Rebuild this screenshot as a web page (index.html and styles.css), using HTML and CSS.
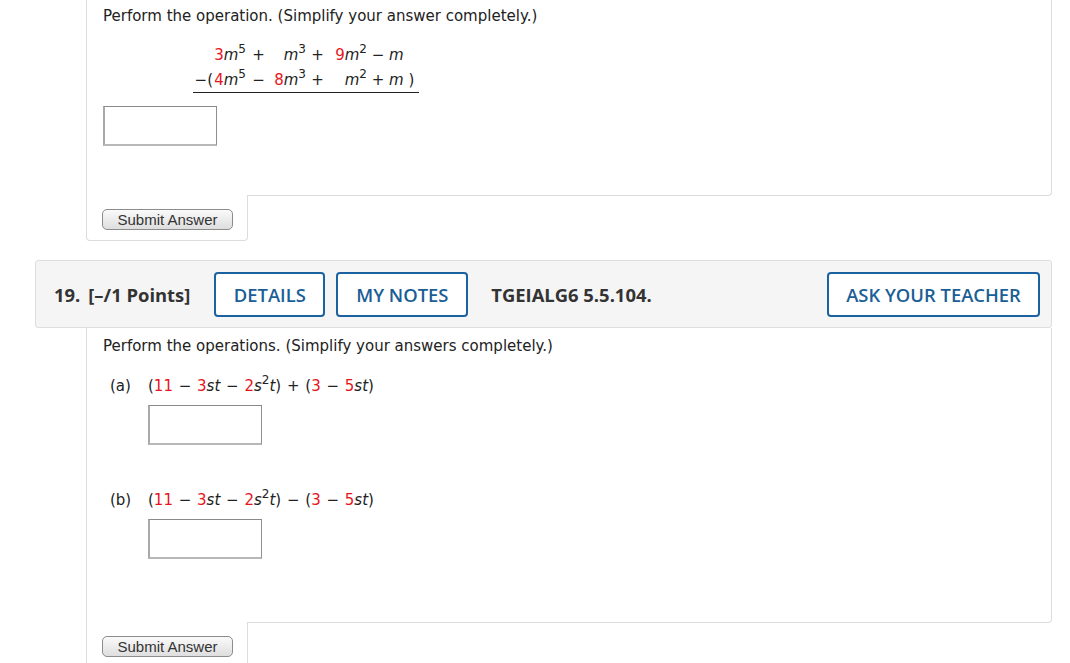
FILE: index.html
```html
<!DOCTYPE html>
<html>
<head>
<meta charset="utf-8">
<link rel="stylesheet" href="styles.css">
</head>
<body>
<div class="page">
  <div class="qbody q1">
    <p class="prompt">Perform the operation. (Simplify your answer completely.)</p>
    <table class="poly">
      <tr>
        <td class="c1"></td>
        <td class="c2"><span class="r">3</span><i>m</i><sup>5</sup></td>
        <td class="c3">+</td>
        <td class="c4"><i>m</i><sup>3</sup></td>
        <td class="c5">+</td>
        <td class="c6"><span class="r">9</span><i>m</i><sup>2</sup></td>
        <td class="c7">−</td>
        <td class="c8"><i>m</i></td>
      </tr>
      <tr class="under">
        <td class="c1">−(</td>
        <td class="c2"><span class="r">4</span><i>m</i><sup>5</sup></td>
        <td class="c3">−</td>
        <td class="c4"><span class="r">8</span><i>m</i><sup>3</sup></td>
        <td class="c5">+</td>
        <td class="c6"><i>m</i><sup>2</sup></td>
        <td class="c7">+</td>
        <td class="c8"><i>m</i> )</td>
      </tr>
    </table>
    <div class="answer a1"></div>
  </div>
  <div class="qfoot">
    <div class="tab"><button class="submit">Submit Answer</button></div>
  </div>

  <div class="qhead">
    <span class="qnum">19.</span>
    <span class="pts">[–/1 Points]</span>
    <button class="hbtn b-details">DETAILS</button>
    <button class="hbtn b-notes">MY NOTES</button>
    <span class="code">TGEIALG6 5.5.104.</span>
    <button class="hbtn b-ask">ASK YOUR TEACHER</button>
  </div>
  <div class="qbody q2">
    <p class="prompt">Perform the operations. (Simplify your answers completely.)</p>
    <div class="part pa">
      <span class="lbl">(a)</span>
      <span class="expr">(<span class="r">11</span> − <span class="r">3</span><i>st</i> − <span class="r">2</span><i>s</i><sup>2</sup><i>t</i>) + (<span class="r">3</span> − <span class="r">5</span><i>st</i>)</span>
    </div>
    <div class="answer a2"></div>
    <div class="part pb">
      <span class="lbl">(b)</span>
      <span class="expr">(<span class="r">11</span> − <span class="r">3</span><i>st</i> − <span class="r">2</span><i>s</i><sup>2</sup><i>t</i>) − (<span class="r">3</span> − <span class="r">5</span><i>st</i>)</span>
    </div>
    <div class="answer a2"></div>
  </div>
  <div class="qfoot">
    <div class="tab"><button class="submit">Submit Answer</button></div>
  </div>
</div>
</body>
</html>
```
FILE: styles.css
```css
html, body {
  margin: 0;
  padding: 0;
  background: #fff;
}
body {
  font-family: "DejaVu Sans", Verdana, sans-serif;
  font-size: 15px;
  color: #222;
  overflow: hidden;
}
.page {
  padding-left: 35px;
  width: 1017px;
}
.qbody {
  margin-left: 51px;
  width: 932px;
  border-left: 1px solid #dcdcdc;
  border-right: 1px solid #dcdcdc;
  border-bottom: 1px solid #dcdcdc;
  border-bottom-right-radius: 4px;
  padding: 0 16px;
}
.q1 {
  height: 195px;
}
.q2 {
  height: 294px;
}
.prompt {
  margin: 0;
  line-height: 18px;
}
.q1 .prompt {
  padding-top: 7px;
}
.q2 .prompt {
  padding-top: 9px;
}
.r {
  color: #e8141b;
}
i {
  font-style: italic;
}
sup {
  font-size: 12px;
  line-height: 0;
  vertical-align: 7px;
}
.poly {
  border-collapse: collapse;
  margin-top: 16px;
  margin-left: 90px;
}
.poly td {
  padding: 0;
  height: 23px;
  white-space: nowrap;
  vertical-align: bottom;
  padding-bottom: 2px;
}
.poly .under td {
  border-bottom: 1px solid #222;
  padding-bottom: 3px;
}
.c1 { width: 20px; text-align: right; }
.c2 { width: 33px; text-align: right; }
.c3 { width: 25px; text-align: center; }
.c4 { width: 35px; text-align: right; }
.c5 { width: 23px; text-align: center; }
.c6 { width: 38px; text-align: right; }
.c7 { width: 22px; text-align: center; }
.c8 { width: 30px; text-align: left; padding-left: 2px; }
.answer {
  width: 111px;
  height: 37px;
  border-top: 1px solid #8a8a8a;
  border-left: 2px solid #a9a9a9;
  border-bottom: 2px solid #b8b8b8;
  border-right: 1px solid #8f8f8f;
  background: #fff;
}
.a1 {
  margin-top: 13px;
}
.qfoot {
  display: flex;
  margin-left: 51px;
}
.tab {
  margin-top: -1px;
  height: 46px;
  background: #fff;
  border-left: 1px solid #dcdcdc;
  border-right: 1px solid #dcdcdc;
  border-bottom: 1px solid #dcdcdc;
  border-radius: 0 0 4px 4px;
  padding: 14px 0 0 15px;
  box-sizing: border-box;
  width: 162px;
}
.submit {
  display: block;
  width: 131px;
  height: 21px;
  padding: 0;
  font-family: "Liberation Sans", Arial, sans-serif;
  font-size: 15px;
  color: #333;
  border: 1px solid #8c8c8c;
  border-radius: 5px;
  background: linear-gradient(#fafafa, #dedede);
  line-height: 19px;
}
.qhead {
  margin-top: 19px;
  height: 66px;
  background: #f5f5f5;
  border: 1px solid #dedede;
  border-radius: 3px;
  display: flex;
  align-items: center;
  padding: 0 11px 0 18px;
  font-family: "Open Sans", sans-serif;
  font-weight: 700;
  font-size: 18.4px;
  color: #333;
}
.qnum {
  margin-right: 8px;
}
.pts {
  margin-right: 24px;
}
.hbtn {
  height: 45px;
  box-sizing: border-box;
  border: 2px solid #1a62a0;
  border-radius: 4px;
  background: #fff;
  color: #1b5e96;
  font-family: "Open Sans", sans-serif;
  font-weight: 600;
  font-size: 18.4px;
  padding: 0;
  margin-top: 1px;
}
.b-details {
  width: 111px;
  margin-right: 11px;
}
.b-notes {
  width: 132px;
  margin-right: 23px;
}
.b-ask {
  width: 213px;
  margin-left: auto;
}
.part {
  display: flex;
  line-height: 18px;
  padding-left: 7px;
}
.lbl {
  width: 38px;
}
.expr {
  word-spacing: 1px;
}
.pa {
  margin-top: 22px;
}
.pb {
  margin-top: 46px;
}
.q2 .answer {
  margin-left: 45px;
  margin-top: 10px;
}
```
